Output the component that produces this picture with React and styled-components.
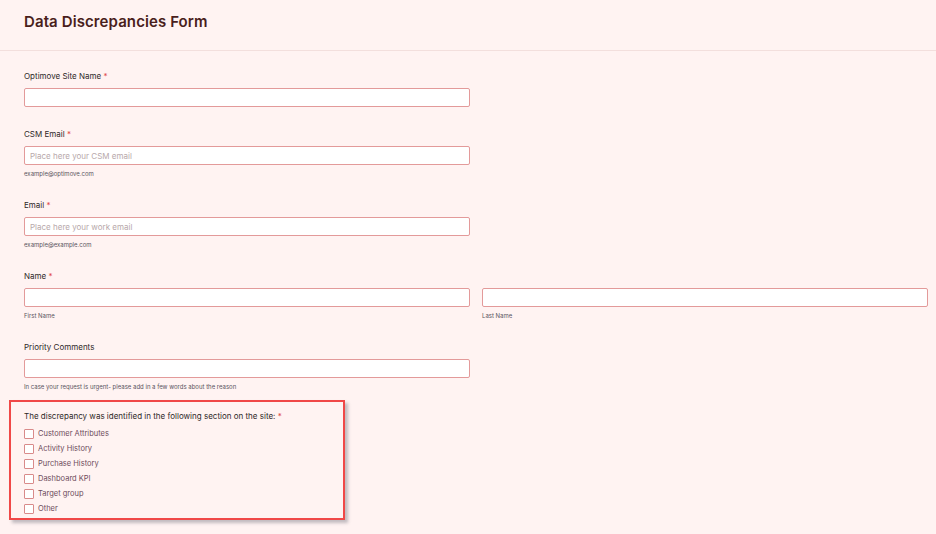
import React from "react"
import styled, { createGlobalStyle } from "styled-components"

const Global = createGlobalStyle`
  body {
    margin: 0;
    background: #fff3f2;
    font-family: Inter, "Noto Sans", sans-serif;
  }
`

const SECOES = [
  "Customer Attributes",
  "Activity History",
  "Purchase History",
  "Dashboard KPI",
  "Target group",
  "Other",
]

export default function App() {
  return (
    <>
      <Global />
      <Pagina>
        <Cabecalho>
          <Titulo>Data Discrepancies Form</Titulo>
        </Cabecalho>
        <Formulario>
          <Campo>
            <Rotulo>Optimove Site Name <Obrigatorio>*</Obrigatorio></Rotulo>
            <Linha>
              <Entrada />
            </Linha>
          </Campo>

          <Campo>
            <Rotulo>CSM Email <Obrigatorio>*</Obrigatorio></Rotulo>
            <Linha>
              <div>
                <Entrada placeholder="Place here your CSM email" />
                <Ajuda>example@optimove.com</Ajuda>
              </div>
            </Linha>
          </Campo>

          <Campo>
            <Rotulo>Email <Obrigatorio>*</Obrigatorio></Rotulo>
            <Linha>
              <div>
                <Entrada placeholder="Place here your work email" />
                <Ajuda>example@example.com</Ajuda>
              </div>
            </Linha>
          </Campo>

          <Campo>
            <Rotulo>Name <Obrigatorio>*</Obrigatorio></Rotulo>
            <Linha>
              <div>
                <Entrada />
                <Ajuda>First Name</Ajuda>
              </div>
              <div>
                <Entrada />
                <Ajuda>Last Name</Ajuda>
              </div>
            </Linha>
          </Campo>

          <Campo>
            <Rotulo>Priority Comments</Rotulo>
            <Linha>
              <div>
                <Entrada />
                <Ajuda>In case your request is urgent- please add in a few words about the reason</Ajuda>
              </div>
            </Linha>
          </Campo>

          <Destaque>
            <Pergunta>
              The discrepancy was identified in the following section on the site: <Obrigatorio>*</Obrigatorio>
            </Pergunta>
            {SECOES.map(item => (
              <Opcao key={item}>
                <Caixa type="checkbox" />
                <span>{item}</span>
              </Opcao>
            ))}
          </Destaque>
        </Formulario>
      </Pagina>
    </>
  )
}

const Pagina = styled.div`
  width: 100%;
  min-height: 534px;
  background: #fff3f2;
`

const Cabecalho = styled.div`
  height: 51px;
  box-sizing: border-box;
  border-bottom: 1px solid #f3dfdd;
  display: flex;
  align-items: center;
  padding: 0 24px 8px;
`

const Titulo = styled.h1`
  margin: 0;
  font-size: 15px;
  font-weight: 600;
  color: #4a1e1c;
  letter-spacing: 0.1px;
`

const Formulario = styled.div`
  padding: 19px 8px 0 24px;
  display: flex;
  flex-direction: column;
`

const Campo = styled.div`
  display: flex;
  flex-direction: column;
  margin-bottom: 21px;
`

const Rotulo = styled.div`
  font-size: 8px;
  line-height: 12px;
  font-weight: 400;
  color: #2e2828;
  margin-bottom: 6px;
`

const Obrigatorio = styled.span`
  color: #e04848;
`

const Linha = styled.div`
  display: grid;
  grid-template-columns: 1fr 1fr;
  column-gap: 12px;
`

const Entrada = styled.input`
  display: block;
  width: 100%;
  box-sizing: border-box;
  height: 19px;
  border: 1px solid #e39a9a;
  border-radius: 2px;
  background: #ffffff;
  padding: 0 5px;
  font-family: inherit;
  font-size: 8px;
  color: #333;
  outline: none;
  &::placeholder {
    color: #b7a8aa;
  }
`

const Ajuda = styled.div`
  margin-top: 5px;
  font-size: 6px;
  line-height: 8px;
  color: #5a5460;
`

const Destaque = styled.div`
  box-sizing: border-box;
  width: 336px;
  margin: -12px 0 0 -15px;
  border: 2px solid #f04848;
  box-shadow: 3px 3px 3px rgba(120, 120, 130, 0.45);
  padding: 8px 0 2px 13px;
`

const Pergunta = styled.div`
  font-size: 8px;
  line-height: 12px;
  font-weight: 400;
  color: #2e2828;
  margin-bottom: 4px;
`

const Opcao = styled.label`
  display: flex;
  align-items: center;
  gap: 4px;
  height: 15px;
  font-size: 7.5px;
  color: #6e4c5c;
`

const Caixa = styled.input`
  appearance: none;
  margin: 0;
  width: 10px;
  height: 10px;
  box-sizing: border-box;
  border: 1px solid #d98a8a;
  border-radius: 1px;
  background: #fff;
`
